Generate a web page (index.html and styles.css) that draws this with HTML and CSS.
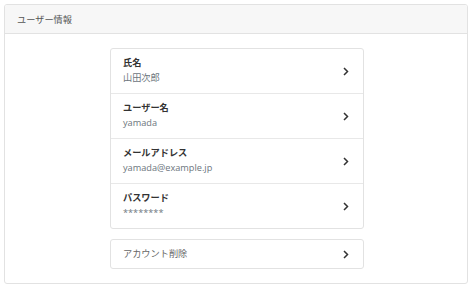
FILE: index.html
```html
<!DOCTYPE html>
<html lang="ja">
<head>
<meta charset="utf-8">
<title>ユーザー情報</title>
<link rel="stylesheet" href="styles.css">
</head>
<body>
<div class="card">
  <div class="card-header">ユーザー情報</div>
  <div class="card-body">
    <div class="list">
      <a class="item">
        <div class="text"><div class="label">氏名</div><div class="value">山田次郎</div></div>
        <svg class="chev" viewBox="0 0 6 9" width="6" height="9"><polyline points="1,1 4.5,4.5 1,8" fill="none" stroke="#333" stroke-width="1.5"/></svg>
      </a>
      <a class="item">
        <div class="text"><div class="label">ユーザー名</div><div class="value">yamada</div></div>
        <svg class="chev" viewBox="0 0 6 9" width="6" height="9"><polyline points="1,1 4.5,4.5 1,8" fill="none" stroke="#333" stroke-width="1.5"/></svg>
      </a>
      <a class="item">
        <div class="text"><div class="label">メールアドレス</div><div class="value">yamada@example.jp</div></div>
        <svg class="chev" viewBox="0 0 6 9" width="6" height="9"><polyline points="1,1 4.5,4.5 1,8" fill="none" stroke="#333" stroke-width="1.5"/></svg>
      </a>
      <a class="item">
        <div class="text"><div class="label">パスワード</div><div class="value">********</div></div>
        <svg class="chev" viewBox="0 0 6 9" width="6" height="9"><polyline points="1,1 4.5,4.5 1,8" fill="none" stroke="#333" stroke-width="1.5"/></svg>
      </a>
    </div>
    <div class="list single">
      <a class="item">
        <div class="plain">アカウント削除</div>
        <svg class="chev" viewBox="0 0 6 9" width="6" height="9"><polyline points="1,1 4.5,4.5 1,8" fill="none" stroke="#333" stroke-width="1.5"/></svg>
      </a>
    </div>
  </div>
</div>
</body>
</html>
```
FILE: styles.css
```css
html, body {
  margin: 0;
  padding: 0;
  background: #fff;
}
body {
  font-family: "Open Sans", "Noto Sans CJK JP", sans-serif;
  font-size: 9.2px;
  color: #333;
  padding: 4px;
}
.card {
  width: 462px;
  border: 1px solid #e2e2e2;
  border-radius: 3px;
  background: #fff;
  overflow: hidden;
}
.card-header {
  height: 29px;
  box-sizing: border-box;
  background: #f7f7f7;
  border-bottom: 1px solid #e2e2e2;
  padding: 0 12px;
  display: flex;
  align-items: center;
  color: #555;
  font-size: 9.2px;
}
.card-body {
  padding: 14px 0 14px;
  display: flex;
  flex-direction: column;
  align-items: center;
  gap: 10px;
}
.list {
  width: 252px;
  border: 1px solid #e2e2e2;
  border-radius: 3px;
  margin-left: 2px;
}
.item {
  display: flex;
  align-items: center;
  justify-content: space-between;
  padding: 7px 14px 7px 12px;
  border-top: 1px solid #e8e8e8;
  color: #333;
  text-decoration: none;
}
.item:first-child {
  border-top: none;
}
.label {
  font-weight: bold;
  line-height: 14px;
  color: #333;
}
.value {
  line-height: 16px;
  color: #6c757d;
}
.single .item {
  height: 28px;
  box-sizing: border-box;
}
.plain {
  color: #666;
  line-height: 14px;
}
.chev {
  display: block;
  flex: none;
}
```
